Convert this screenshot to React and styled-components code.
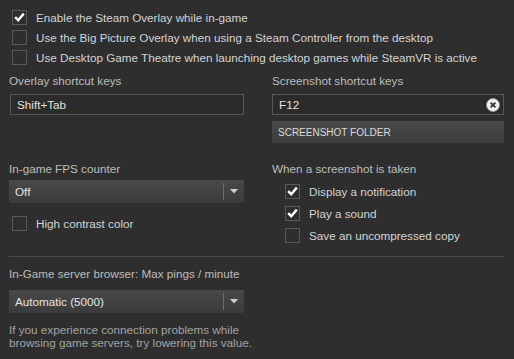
import React from "react";
import styled, { createGlobalStyle } from "styled-components";

const Global = createGlobalStyle`
  html, body { margin: 0; padding: 0; background: #2e2e2e; }
  body { font-family: "Liberation Sans", Arial, sans-serif; font-size: 11.7px; }
`;

const Page = styled.div`
  width: 514px;
  height: 359px;
  box-sizing: border-box;
  padding: 7px 10px 0 9px;
  background: #2e2e2e;
  color: #c8c8c8;
  overflow: hidden;
`;

const CheckList = styled.div`
  display: flex;
  flex-direction: column;
  padding-left: ${(p) => p.$indent || 0}px;
`;

const Row = styled.label`
  display: flex;
  align-items: center;
  height: ${(p) => p.$h || 20}px;
  gap: 9px;
  color: #d2d4d6;
  font-size: 11.7px;
  white-space: nowrap;
`;

const Box = styled.span`
  width: 13px;
  height: 13px;
  border: 1px solid #595959;
  display: inline-flex;
  align-items: center;
  justify-content: center;
  flex: none;
`;

const Check = ({ on }) => (
  <Box>
    {on && (
      <svg width="11" height="10" viewBox="0 0 11 10">
        <path d="M1.2 5.2 L4.2 8.2 L9.8 1.6" fill="none" stroke="#ffffff" strokeWidth="2.4" />
      </svg>
    )}
  </Box>
);

const Grid = styled.div`
  display: grid;
  grid-template-columns: 235px 232px;
  column-gap: 28px;
  margin-top: ${(p) => p.$mt || 0}px;
`;

const Col = styled.div`
  display: flex;
  flex-direction: column;
`;

const Label = styled.div`
  color: #bdbdbd;
  font-size: 11.7px;
  line-height: 14px;
  margin-bottom: ${(p) => p.$mb || 6}px;
`;

const InputWrap = styled.div`
  position: relative;
  height: 19px;
  border: 1px solid #575757;
  background: #2b2b2b;
  margin-left: ${(p) => p.$ml || 0}px;
  display: flex;
  align-items: center;
  padding-left: 6px;
  color: #e0e0e0;
  font-size: 11.7px;
`;

const Clear = styled.span`
  position: absolute;
  right: 3px;
  top: 3px;
  display: flex;
`;

const Button = styled.div`
  margin-top: 6px;
  height: 22px;
  display: flex;
  align-items: center;
  padding-left: 6px;
  background: linear-gradient(#4b4b4b, #3c3c3c);
  color: #dcdcdc;
  font-size: 10px;
`;

const Select = styled.div`
  width: ${(p) => p.$w || "auto"};
  height: 23px;
  display: flex;
  align-items: center;
  background: linear-gradient(#494949, #3b3b3b);
  color: #e4e4e4;
  font-size: 11.7px;
`;

const SelectText = styled.span`
  flex: 1;
  padding-left: 6px;
`;

const Caret = styled.span`
  width: 20px;
  height: 17px;
  border-left: 1px solid #6c6c6c;
  display: flex;
  align-items: center;
  justify-content: center;
`;

const Separator = styled.div`
  height: 1px;
  background: #474747;
  margin: 10px 0 10px 0;
`;

const Help = styled.div`
  margin-top: 10px;
  color: #a3a3a3;
  font-size: 11.7px;
  line-height: 13px;
`;

const Arrow = () => (
  <svg width="8" height="5" viewBox="0 0 8 5">
    <path d="M0 0 H8 L4 4.5 Z" fill="#cfcfcf" />
  </svg>
);

const Dropdown = ({ value, width }) => (
  <Select $w={width}>
    <SelectText>{value}</SelectText>
    <Caret>
      <Arrow />
    </Caret>
  </Select>
);

const Gap = styled.div`
  height: ${(p) => p.$h}px;
`;

export default function App() {
  return (
    <>
      <Global />
      <Page>
        <CheckList $indent={3}>
          <Row>
            <Check on />
            Enable the Steam Overlay while in-game
          </Row>
          <Row>
            <Check />
            Use the Big Picture Overlay when using a Steam Controller from the desktop
          </Row>
          <Row>
            <Check />
            Use Desktop Game Theatre when launching desktop games while SteamVR is active
          </Row>
        </CheckList>

        <Grid $mt={7}>
          <Col>
            <Label>Overlay shortcut keys</Label>
            <InputWrap $ml={1}>Shift+Tab</InputWrap>
          </Col>
          <Col>
            <Label>Screenshot shortcut keys</Label>
            <InputWrap>
              F12
              <Clear>
                <svg width="14" height="14" viewBox="0 0 14 14">
                  <circle cx="7" cy="7" r="6.5" fill="#f0f0f0" stroke="#9a9a9a" strokeWidth="0.8" />
                  <path d="M4.6 4.6 L9.4 9.4 M9.4 4.6 L4.6 9.4" stroke="#3a3a3a" strokeWidth="2" />
                </svg>
              </Clear>
            </InputWrap>
            <Button>SCREENSHOT FOLDER</Button>
          </Col>
        </Grid>

        <Grid $mt={19}>
          <Col>
            <Label $mb={4}>In-game FPS counter</Label>
            <Dropdown value="Off" />
            <Gap $h={10} />
            <CheckList $indent={3}>
              <Row>
                <Check />
                High contrast color
              </Row>
            </CheckList>
          </Col>
          <Col>
            <Label $mb={4}>When a screenshot is taken</Label>
            <CheckList $indent={13}>
              <Row $h={22}>
                <Check on />
                Display a notification
              </Row>
              <Row $h={22}>
                <Check on />
                Play a sound
              </Row>
              <Row $h={22}>
                <Check />
                Save an uncompressed copy
              </Row>
            </CheckList>
          </Col>
        </Grid>

        <Separator />

        <Label $mb={9}>In-Game server browser: Max pings / minute</Label>
        <Dropdown value="Automatic (5000)" width="235px" />
        <Help>
          If you experience connection problems while
          <br />
          browsing game servers, try lowering this value.
        </Help>
      </Page>
    </>
  );
}
